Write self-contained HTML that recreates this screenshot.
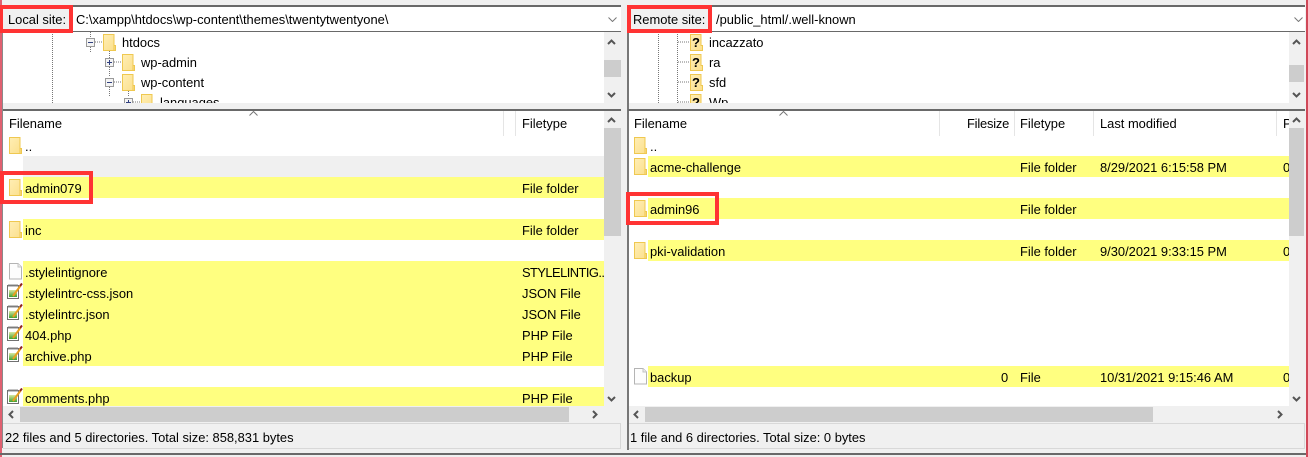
<!DOCTYPE html>
<html><head><meta charset="utf-8"><style>
html,body{margin:0;padding:0}
body{width:1308px;height:457px;position:relative;overflow:hidden;background:#f0f0f0;font:12.9px/21px "Liberation Sans",sans-serif;color:#000}
div{position:absolute;box-sizing:border-box}
.t{white-space:nowrap;height:21px}
.w{background:#fff}
.y{background:#ffff80;height:21px}
.sb{background:#f0f0f0}
.th{background:#cdcdcd}
.dk{background:#696969}
.sep{background:#e5e5e5;width:1px;top:110px;height:25px}
.red{border:4px solid #ff3333}
svg{position:absolute;overflow:visible}
</style></head><body>
<svg width="0" height="0" style="position:absolute"><defs>
<linearGradient id="fg" x1="0" y1="0" x2="1" y2="1"><stop offset="0" stop-color="#ffeeb4"/><stop offset="1" stop-color="#fbdf8c"/></linearGradient>
<linearGradient id="gg" x1="0" y1="0" x2="0" y2="1"><stop offset="0" stop-color="#d8e8a0"/><stop offset="1" stop-color="#40a030"/></linearGradient>
<symbol id="f" viewBox="0 0 13 17" width="13" height="17"><path d="M.5.5h10.500v11h1.500v5H.5z" fill="url(#fg)" stroke="#efc850"/><path d="M11 12v4.500" stroke="#efc850"/></symbol>
<symbol id="p" viewBox="0 0 13 17" width="13" height="17"><path d="M.5.5h8.500l3.500 3.500v12H.5z" fill="#fdfdfd" stroke="#b4b4b4"/><path d="M9 .5v3.500h3.500" fill="#eee" stroke="#c4c4c4"/></symbol>
<symbol id="e" viewBox="0 0 16 17" width="16" height="17"><path d="M.5 2.500h11v13H.5z" fill="#fff" stroke="#707070"/><path d="M2 1v3M4 1v3M6 1v3M8 1v3M10 1v3" stroke="#888"/><rect x="2" y="7" width="8" height="7" fill="url(#gg)"/><path d="M6 13L14 2" stroke="#e8a020" stroke-width="2"/><path d="M13 3L15 .5" stroke="#902020" stroke-width="2"/></symbol>
<symbol id="q" viewBox="0 0 13 17" width="13" height="17"><path d="M.5.5h10.500v11h1.500v5H.5z" fill="url(#fg)" stroke="#efc850"/></symbol>
<symbol id="plus" viewBox="0 0 9 9" width="9" height="9"><rect x=".5" y=".5" width="8" height="8" fill="#f4f4f4" stroke="#9a9a9a"/><path d="M2 4.500h5M4.500 2v5" stroke="#304080"/></symbol>
<symbol id="minus" viewBox="0 0 9 9" width="9" height="9"><rect x=".5" y=".5" width="8" height="8" fill="#f4f4f4" stroke="#9a9a9a"/><path d="M2 4.500h5" stroke="#304080"/></symbol>
<symbol id="up" viewBox="0 0 9 6" width="9" height="6"><path d="M1 5l3.500-3.500L8 5" fill="none" stroke="#555" stroke-width="2"/></symbol>
<symbol id="dn" viewBox="0 0 9 6" width="9" height="6"><path d="M1 1l3.500 3.500L8 1" fill="none" stroke="#555" stroke-width="2"/></symbol>
<symbol id="lf" viewBox="0 0 6 9" width="6" height="9"><path d="M5 1L1.500 4.500 5 8" fill="none" stroke="#555" stroke-width="2"/></symbol>
<symbol id="rt" viewBox="0 0 6 9" width="6" height="9"><path d="M1 1l3.500 3.500L1 8" fill="none" stroke="#555" stroke-width="2"/></symbol>
<symbol id="cb" viewBox="0 0 9 5" width="9" height="5"><path d="M.5.500l4 4 4-4" fill="none" stroke="#777"/></symbol>
<symbol id="so" viewBox="0 0 9 5" width="9" height="5"><path d="M.5 4.500l4-4 4 4" fill="none" stroke="#777"/></symbol>
</defs></svg>

<!-- outer edges -->
<div style="left:0;top:0;width:2px;height:457px;background:#e06070"></div>
<div style="left:2px;top:5px;width:1px;height:443px;background:#8a8a8a"></div>
<div style="left:1306px;top:0;width:2px;height:457px;background:#d04858"></div>
<div class="dk" style="left:0;top:453px;width:1306px;height:2px"></div>

<!-- LEFT combo -->
<div class="dk" style="left:3px;top:5px;width:618px;height:2px"></div>
<div class="w" style="left:3px;top:7px;width:618px;height:24px"></div>
<div style="left:3px;top:8px;width:68px;height:23px;background:#f0f0f0"></div>
<div class="t" style="left:8px;top:9px">Local site:</div>
<div class="t" style="left:76px;top:9px">C:\xampp\htdocs\wp-content\themes\twentytwentyone\</div>
<svg style="left:608px;top:17px" width="9" height="5"><use href="#cb"/></svg>
<div class="dk" style="left:3px;top:31px;width:618px;height:1px"></div>

<!-- LEFT tree -->
<div class="w" style="left:3px;top:32px;width:601px;height:71px;overflow:hidden">
<svg style="left:-3px;top:-32px" width="620" height="140">
<path d="M52.500 32v71M90.500 32v6M90.500 47v6M109.500 47v11M109.500 67v10M109.500 87v10M128.500 87v10" stroke="#777" stroke-dasharray="1 1"/>
<path d="M95 42h7M114 62h7M114 82h7M133 102h7" stroke="#777" stroke-dasharray="1 1"/>
<use href="#minus" x="86" y="38"/><use href="#f" x="103" y="34"/>
<use href="#plus" x="105" y="58"/><use href="#f" x="122" y="54"/>
<use href="#minus" x="105" y="78"/><use href="#f" x="122" y="74"/>
<use href="#plus" x="124" y="98"/><use href="#f" x="141" y="94"/>
</svg>
<div class="t" style="left:119px;top:0">htdocs</div>
<div class="t" style="left:138px;top:20px">wp-admin</div>
<div class="t" style="left:138px;top:40px">wp-content</div>
<div class="t" style="left:157px;top:60px">languages</div>
</div>
<div class="sb" style="left:604px;top:32px;width:17px;height:71px"></div>
<div class="th" style="left:604px;top:60px;width:17px;height:17px"></div>
<svg style="left:607px;top:39px" width="9" height="6"><use href="#up"/></svg>
<svg style="left:607px;top:92px" width="9" height="6"><use href="#dn"/></svg>

<!-- LEFT listing -->
<div class="dk" style="left:3px;top:109px;width:618px;height:2px"></div>
<div class="w" style="left:3px;top:111px;width:601px;height:295px"></div>
<div class="sep" style="left:503px;top:111px"></div>
<div class="sep" style="left:515px;top:111px"></div>
<svg style="left:249px;top:111px" width="9" height="5"><use href="#so"/></svg>
<div class="t" style="left:9px;top:113px">Filename</div>
<div class="t" style="left:522px;top:113px">Filetype</div>

<div style="left:23px;top:156px;width:581px;height:21px;background:#f0f0f0"></div>
<div class="y" style="left:23px;top:177px;width:581px"></div>
<div class="y" style="left:23px;top:219px;width:581px"></div>
<div class="y" style="left:23px;top:261px;width:581px;height:105px"></div>
<div class="y" style="left:23px;top:387px;width:581px;height:19px"></div>

<svg style="left:0;top:0" width="620" height="410">
<use href="#f" x="9" y="137"/><use href="#f" x="9" y="179"/><use href="#f" x="9" y="221"/>
<use href="#p" x="9" y="263"/><use href="#e" x="7" y="283"/><use href="#e" x="7" y="304"/><use href="#e" x="7" y="325"/><use href="#e" x="7" y="346"/><use href="#e" x="7" y="388"/>
</svg>
<div class="t" style="left:25px;top:136px">..</div>
<div class="t" style="left:25px;top:178px">admin079</div>
<div class="t" style="left:25px;top:220px">inc</div>
<div class="t" style="left:25px;top:262px">.stylelintignore</div>
<div class="t" style="left:25px;top:283px">.stylelintrc-css.json</div>
<div class="t" style="left:25px;top:304px">.stylelintrc.json</div>
<div class="t" style="left:25px;top:325px">404.php</div>
<div class="t" style="left:25px;top:346px">archive.php</div>
<div class="t" style="left:25px;top:388px;height:18px;overflow:hidden">comments.php</div>
<div class="t" style="left:522px;top:178px">File folder</div>
<div class="t" style="left:522px;top:220px">File folder</div>
<div class="t" style="left:522px;top:262px;width:82px;overflow:hidden;letter-spacing:-.55px">STYLELINTIG...</div>
<div class="t" style="left:522px;top:283px">JSON File</div>
<div class="t" style="left:522px;top:304px">JSON File</div>
<div class="t" style="left:522px;top:325px">PHP File</div>
<div class="t" style="left:522px;top:346px">PHP File</div>
<div class="t" style="left:522px;top:388px;height:18px;overflow:hidden">PHP File</div>

<div class="sb" style="left:604px;top:111px;width:17px;height:295px"></div>
<div class="th" style="left:604px;top:128px;width:17px;height:108px"></div>
<svg style="left:607px;top:117px" width="9" height="6"><use href="#up"/></svg>
<svg style="left:607px;top:396px" width="9" height="6"><use href="#dn"/></svg>
<div class="sb" style="left:3px;top:406px;width:618px;height:17px"></div>
<div class="th" style="left:20px;top:407px;width:549px;height:15px"></div>
<svg style="left:8px;top:410px" width="6" height="9"><use href="#lf"/></svg>
<svg style="left:592px;top:410px" width="6" height="9"><use href="#rt"/></svg>
<div style="left:3px;top:423px;width:618px;height:1px;background:#d8d8d8"></div>
<div style="left:3px;top:448px;width:618px;height:1px;background:#d8d8d8"></div>
<div style="left:620px;top:424px;width:1px;height:25px;background:#d8d8d8"></div>
<div class="t" style="left:5px;top:427px">22 files and 5 directories. Total size: 858,831 bytes</div>

<!-- RIGHT edge -->
<div style="left:627px;top:5px;width:1.500px;height:445px;background:#777"></div>

<!-- RIGHT combo -->
<div class="dk" style="left:628px;top:5px;width:677px;height:2px"></div>
<div class="w" style="left:628px;top:7px;width:677px;height:24px"></div>
<div style="left:628px;top:8px;width:80px;height:23px;background:#f0f0f0"></div>
<div class="t" style="left:633px;top:9px">Remote site:</div>
<div class="t" style="left:716px;top:9px">/public_html/.well-known</div>
<svg style="left:1294px;top:17px" width="9" height="5"><use href="#cb"/></svg>
<div class="dk" style="left:628px;top:31px;width:677px;height:1px"></div>

<!-- RIGHT tree -->
<div class="w" style="left:629px;top:32px;width:660px;height:71px;overflow:hidden">
<svg style="left:-629px;top:-32px" width="1300" height="140">
<path d="M658.500 32v71M677.500 32v71" stroke="#777" stroke-dasharray="1 1"/>
<path d="M678 42h11M678 62h11M678 82h11M678 102h11" stroke="#777" stroke-dasharray="1 1"/>
<use href="#q" x="690" y="34"/><use href="#q" x="690" y="54"/><use href="#q" x="690" y="74"/><use href="#q" x="690" y="94"/>
<g font-family="Liberation Sans" font-weight="bold" font-size="13" text-anchor="middle" fill="#000"><text x="696" y="47">?</text><text x="696" y="67">?</text><text x="696" y="87">?</text><text x="696" y="107">?</text></g>
</svg>
<div class="t" style="left:80px;top:0">incazzato</div>
<div class="t" style="left:80px;top:20px">ra</div>
<div class="t" style="left:80px;top:40px">sfd</div>
<div class="t" style="left:80px;top:60px">Wp</div>
</div>
<div class="sb" style="left:1289px;top:32px;width:16px;height:71px"></div>
<div class="th" style="left:1289px;top:65px;width:15px;height:17px"></div>
<svg style="left:1292px;top:39px" width="9" height="6"><use href="#up"/></svg>
<svg style="left:1292px;top:92px" width="9" height="6"><use href="#dn"/></svg>

<!-- RIGHT listing -->
<div class="dk" style="left:628px;top:109px;width:677px;height:2px"></div>
<div class="w" style="left:629px;top:111px;width:660px;height:295px"></div>
<div class="sep" style="left:939px;top:111px"></div>
<div class="sep" style="left:1014px;top:111px"></div>
<div class="sep" style="left:1093px;top:111px"></div>
<div class="sep" style="left:1276px;top:111px"></div>
<svg style="left:779px;top:111px" width="9" height="5"><use href="#so"/></svg>
<div class="t" style="left:634px;top:113px">Filename</div>
<div class="t" style="left:967px;top:113px;letter-spacing:-.2px">Filesize</div>
<div class="t" style="left:1020px;top:113px">Filetype</div>
<div class="t" style="left:1100px;top:113px">Last modified</div>
<div class="t" style="left:1283px;top:113px;width:6px;overflow:hidden">P</div>

<div class="y" style="left:648px;top:156px;width:641px"></div>
<div class="y" style="left:648px;top:198px;width:641px"></div>
<div class="y" style="left:648px;top:240px;width:641px"></div>
<div class="y" style="left:648px;top:366px;width:641px"></div>
<svg style="left:0;top:0" width="1300" height="410">
<use href="#f" x="634" y="137"/><use href="#f" x="634" y="158"/><use href="#f" x="634" y="200"/><use href="#f" x="634" y="242"/><use href="#p" x="634" y="368"/>
</svg>
<div class="t" style="left:650px;top:136px">..</div>
<div class="t" style="left:650px;top:157px">acme-challenge</div>
<div class="t" style="left:650px;top:199px">admin96</div>
<div class="t" style="left:650px;top:241px">pki-validation</div>
<div class="t" style="left:650px;top:367px">backup</div>
<div class="t" style="left:1020px;top:157px">File folder</div>
<div class="t" style="left:1020px;top:199px">File folder</div>
<div class="t" style="left:1020px;top:241px">File folder</div>
<div class="t" style="left:1020px;top:367px">File</div>
<div class="t" style="left:1001px;top:367px">0</div>
<div class="t" style="left:1100px;top:157px">8/29/2021 6:15:58 PM</div>
<div class="t" style="left:1100px;top:241px">9/30/2021 9:33:15 PM</div>
<div class="t" style="left:1100px;top:367px">10/31/2021 9:15:46 AM</div>
<div class="t" style="left:1283px;top:157px;width:6px;overflow:hidden">0</div>
<div class="t" style="left:1283px;top:241px;width:6px;overflow:hidden">0</div>
<div class="t" style="left:1283px;top:367px;width:6px;overflow:hidden">0</div>

<div class="sb" style="left:1289px;top:111px;width:16px;height:295px"></div>
<div class="th" style="left:1289px;top:128px;width:15px;height:108px"></div>
<svg style="left:1292px;top:117px" width="9" height="6"><use href="#up"/></svg>
<svg style="left:1292px;top:396px" width="9" height="6"><use href="#dn"/></svg>
<div class="sb" style="left:629px;top:406px;width:676px;height:17px"></div>
<div class="th" style="left:645px;top:407px;width:508px;height:15px"></div>
<svg style="left:633px;top:410px" width="6" height="9"><use href="#lf"/></svg>
<svg style="left:1277px;top:410px" width="6" height="9"><use href="#rt"/></svg>
<div style="left:629px;top:423px;width:676px;height:1px;background:#d8d8d8"></div>
<div style="left:629px;top:448px;width:676px;height:1px;background:#d8d8d8"></div>
<div style="left:1304px;top:424px;width:1px;height:25px;background:#d8d8d8"></div>
<div class="t" style="left:630px;top:427px">1 file and 6 directories. Total size: 0 bytes</div>

<!-- red highlights -->
<div class="red" style="left:-1px;top:5px;width:74px;height:28px"></div>
<div class="red" style="left:627px;top:5px;width:85px;height:28px"></div>
<div class="red" style="left:0;top:171px;width:93px;height:33px"></div>
<div class="red" style="left:626px;top:192px;width:93px;height:33px"></div>
</body></html>
